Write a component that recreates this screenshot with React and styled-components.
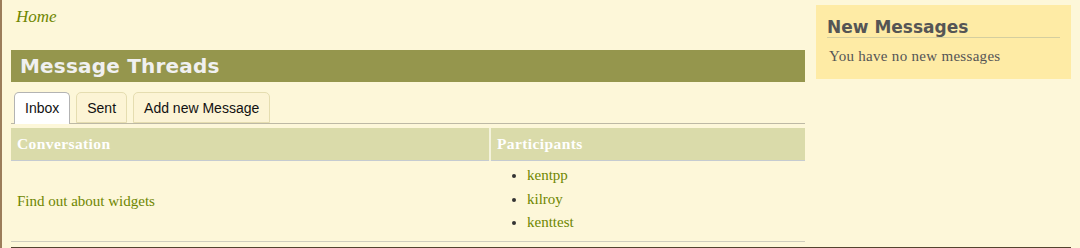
import React from 'react';
import styled, { createGlobalStyle } from 'styled-components';

const Global = createGlobalStyle`
  html, body {
    margin: 0;
    background: #fdf7d9;
  }
  body {
    border-left: 2px solid #9c7d5a;
    font-family: "Liberation Serif", Georgia, serif;
  }
`;

const Page = styled.div`
  padding: 0 9px 0 9px;
`;

const Columns = styled.div`
  display: grid;
  grid-template-columns: 794px 255px;
  column-gap: 11px;
  align-items: start;
`;

const Main = styled.div`
  display: flex;
  flex-direction: column;
`;

const Crumb = styled.a`
  display: block;
  padding: 7px 0 0 5px;
  height: 50px;
  box-sizing: border-box;
  font-style: italic;
  font-size: 17px;
  color: #6e8600;
  text-decoration: none;
`;

const Title = styled.h1`
  margin: 0;
  height: 32px;
  line-height: 32px;
  padding-left: 9px;
  background: #95964d;
  color: #f0f0f0;
  font-family: "DejaVu Sans", Verdana, sans-serif;
  font-weight: bold;
  font-size: 20px;
  letter-spacing: 0.2px;
`;

const Tabs = styled.ul`
  display: flex;
  gap: 6px;
  list-style: none;
  margin: 10px 0 0 0;
  padding: 0 0 0 3px;
  height: 31px;
  border-bottom: 1px solid #bdb9a5;
`;

const Tab = styled.li`
  box-sizing: border-box;
  height: ${({ active }) => (active ? '32px' : '31px')};
  padding: 0 10px;
  line-height: 30px;
  font-family: "Liberation Sans", Arial, sans-serif;
  font-size: 14px;
  color: #111;
  border: 1px solid ${({ active }) => (active ? '#b3b3b3' : '#e5ddb0')};
  border-bottom: ${({ active }) => (active ? 'none' : '1px solid #e5ddb0')};
  border-radius: 5px 5px 0 0;
  background: ${({ active }) => (active ? '#ffffff' : '#fcf4d5')};
`;

const Table = styled.table`
  margin-top: 4px;
  width: 100%;
  border-collapse: collapse;
`;

const Th = styled.th`
  height: 32px;
  padding: 0 6px;
  text-align: left;
  background: #dadbaa;
  color: #ffffff;
  font-size: 15.5px;
  font-weight: bold;
  letter-spacing: 0.4px;
  border-bottom: 1px solid #c5cbd1;
  border-left: ${({ divider }) => (divider ? '2px solid #f4f3dc' : 'none')};
  width: ${({ w }) => w || 'auto'};
`;

const Td = styled.td`
  height: 80px;
  padding: 0 6px;
  vertical-align: middle;
  border-bottom: 1px solid #cfcdbd;
  font-size: 15px;
`;

const Link = styled.a`
  color: #6e8600;
  text-decoration: none;
`;

const Names = styled.ul`
  margin: 3px 0 6px 0;
  padding-left: 31px;
  color: #333;
  li {
    line-height: 23.5px;
  }
`;

const Side = styled.div`
  margin-top: 5px;
  background: #feeba5;
  padding: 12px 11px 14px 11px;
`;

const SideTitle = styled.h2`
  margin: 0;
  padding: 0;
  line-height: 20px;
  font-family: "DejaVu Sans", Verdana, sans-serif;
  font-size: 17px;
  font-weight: bold;
  color: #555555;
  border-bottom: 1px solid #d4ce9f;
`;

const SideText = styled.p`
  margin: 10px 0 0 2px;
  font-size: 15px;
  letter-spacing: 0.3px;
  color: #555555;
`;

const Footer = styled.div`
  margin: 5px 0 0 0;
  height: 6px;
  background: #54432f;
`;

export default function App() {
  return (
    <>
      <Global />
      <Page>
        <Columns>
          <Main>
            <Crumb href="#">Home</Crumb>
            <Title>Message Threads</Title>
            <Tabs>
              <Tab active>Inbox</Tab>
              <Tab>Sent</Tab>
              <Tab>Add new Message</Tab>
            </Tabs>
            <Table>
              <thead>
                <tr>
                  <Th w="466px">Conversation</Th>
                  <Th divider>Participants</Th>
                </tr>
              </thead>
              <tbody>
                <tr>
                  <Td>
                    <Link href="#">Find out about widgets</Link>
                  </Td>
                  <Td>
                    <Names>
                      <li><Link href="#">kentpp</Link></li>
                      <li><Link href="#">kilroy</Link></li>
                      <li><Link href="#">kenttest</Link></li>
                    </Names>
                  </Td>
                </tr>
              </tbody>
            </Table>
          </Main>
          <Side>
            <SideTitle>New Messages</SideTitle>
            <SideText>You have no new messages</SideText>
          </Side>
        </Columns>
        <Footer />
      </Page>
    </>
  );
}
